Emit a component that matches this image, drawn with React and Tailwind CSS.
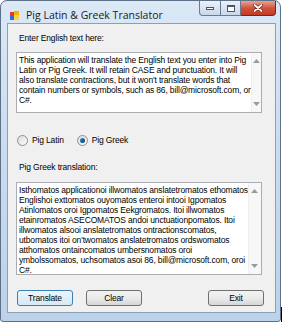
import React from 'react';

const font = { fontFamily: '"Liberation Sans", Arial, sans-serif' };

const inputLines = [
  'This application will translate the English text you enter into Pig',
  'Latin or Pig Greek. It will retain CASE and punctuation. It will',
  "also translate contractions, but it won't translate words that",
  'contain numbers or symbols, such as 86, bill@microsoft.com, or',
  'C#.',
];

const outputLines = [
  'Isthomatos applicationoi illwomatos anslatetromatos ethomatos',
  'Englishoi exttomatos ouyomatos enteroi intooi Igpomatos',
  'Atinlomatos oroi Igpomatos Eekgromatos. Itoi illwomatos',
  'etainromatos ASECOMATOS andoi unctuationpomatos. Itoi',
  'illwomatos alsooi anslatetromatos ontractionscomatos,',
  "utbomatos itoi on'twomatos anslatetromatos ordswomatos",
  'atthomatos ontaincomatos umbersnomatos oroi',
  'ymbolssomatos, uchsomatos asoi 86, bill@microsoft.com, oroi',
  'C#.',
];

const Scrollbar = () => (
  <div className="flex flex-col items-center justify-between w-[15px] h-full bg-[#f7f7f7] border-l border-[#eeeeee] py-[6px]">
    <svg width="7" height="4" viewBox="0 0 7 4">
      <path d="M0 4 L3.5 0 L7 4 Z" fill="#9a9a9a" />
    </svg>
    <svg width="7" height="4" viewBox="0 0 7 4">
      <path d="M0 0 L3.5 4 L7 0 Z" fill="#9a9a9a" />
    </svg>
  </div>
);

const TextBox = ({ lines, height }) => (
  <div className={`flex bg-white border border-[#abadb3] overflow-hidden ${height}`}>
    <div className="flex-1 pl-[2px] pt-[2px] text-[8.5px] leading-[10px] text-black tracking-[-0.15px] whitespace-pre">
      {lines.map((l, i) => (
        <div key={i}>{l}</div>
      ))}
    </div>
    <Scrollbar />
  </div>
);

const Radio = ({ checked, label }) => (
  <div className="flex items-center gap-[4px]">
    <div className="w-[11px] h-[11px] rounded-full border border-[#8e8f8f] bg-gradient-to-br from-[#dcdcdc] to-[#fbfbfb] flex items-center justify-center">
      {checked && (
        <div className="w-[5px] h-[5px] rounded-full bg-gradient-to-br from-[#2f8fd4] to-[#0b3b6b]" />
      )}
    </div>
    <span className="text-[8.5px] text-black tracking-[-0.15px]">{label}</span>
  </div>
);

const Button = ({ label, focused, className }) => (
  <div
    className={`w-[56px] h-[16px] rounded-[3px] border flex items-center justify-center text-[8.5px] text-black tracking-[-0.15px] ${
      focused
        ? 'border-[#3c7fb1] bg-gradient-to-b from-[#eaf6fd] to-[#d5e9f7]'
        : 'border-[#707070] bg-gradient-to-b from-[#f2f2f2] via-[#ebebeb] to-[#d6d6d6]'
    } ${className || ''}`}
  >
    {label}
  </div>
);

export default function App() {
  return (
    <div className="w-[284px] h-[325px] bg-white relative overflow-hidden" style={font}>
      <div className="w-[281px] h-[322px] rounded-t-[7px] rounded-b-[3px] border border-[#5e7187] bg-gradient-to-b from-[#dbe8f6] via-[#c9dbef] to-[#bcd2ea] flex flex-col">
        {/* title bar */}
        <div className="h-[22px] flex items-start justify-between shrink-0">
          <div className="flex items-center gap-[7px] pl-[9px] pt-[7px]">
            <svg width="9" height="9" viewBox="0 0 9 9">
              <rect x="0" y="1" width="4" height="4" fill="#e2382e" />
              <rect x="4" y="0" width="5" height="4" fill="#f4b400" />
              <rect x="0" y="5" width="4" height="4" fill="#2f6fd8" />
              <rect x="4" y="4" width="5" height="5" fill="#f6d24a" />
            </svg>
            <span className="text-[10.5px] text-[#1b1b1b]" style={{ fontFamily: '"Open Sans", "Noto Sans", sans-serif' }}>
              Pig Latin &amp; Greek Translator
            </span>
          </div>
          <div className="flex mr-[4px]">
            <div className="w-[22px] h-[15px] border border-[#6b7b8e] border-t-0 rounded-bl-[4px] bg-gradient-to-b from-[#eaf1f9] to-[#c8d8eb] flex items-center justify-center">
              <div className="w-[8px] h-[3px] border border-[#4a5565] bg-white" />
            </div>
            <div className="w-[20px] h-[15px] border-b border-r border-[#6b7b8e] bg-gradient-to-b from-[#eaf1f9] to-[#c8d8eb] flex items-center justify-center">
              <div className="w-[8px] h-[7px] border border-[#4a5565] border-t-2 bg-white" />
            </div>
            <div className="w-[35px] h-[15px] border-b border-r border-[#6b2a20] rounded-br-[4px] bg-gradient-to-b from-[#e8a391] via-[#d0533c] to-[#c23a22] flex items-center justify-center">
              <svg width="10" height="8" viewBox="0 0 10 8">
                <path d="M1.5 1 L8.5 7 M8.5 1 L1.5 7" stroke="#5a1a10" strokeWidth="3" strokeLinecap="round" />
                <path d="M1.5 1 L8.5 7 M8.5 1 L1.5 7" stroke="#ffffff" strokeWidth="1.8" strokeLinecap="round" />
              </svg>
            </div>
          </div>
        </div>
        {/* client area */}
        <div className="ml-[6px] mr-[3px] w-[269px] h-[290px] bg-[#f0f0f0] border border-[#8e9fb3] flex flex-col">
          <div className="ml-[11px] mt-[9px] h-[10px] flex items-center text-[8.5px] text-black tracking-[-0.15px]">
            Enter English text here:
          </div>
          <div className="ml-[8px] mt-[9px] w-[246px]">
            <TextBox lines={inputLines} height="h-[61px]" />
          </div>
          <div className="ml-[9px] mt-[21px] h-[12px] flex items-center gap-[13px]">
            <Radio label="Pig Latin" />
            <Radio checked label="Pig Greek" />
          </div>
          <div className="ml-[11px] mt-[16px] h-[10px] flex items-center text-[8.5px] text-black tracking-[-0.15px]">
            Pig Greek translation:
          </div>
          <div className="ml-[8px] mt-[10px] w-[246px]">
            <TextBox lines={outputLines} height="h-[93px]" />
          </div>
          <div className="ml-[9px] mt-[15px] flex items-center">
            <Button label="Translate" focused className="w-[55px]" />
            <Button label="Clear" className="ml-[13px]" />
            <Button label="Exit" className="ml-[66px]" />
          </div>
        </div>
      </div>
      <div className="absolute left-[281px] top-[307px] w-[1px] h-[15px] bg-black" />
    </div>
  );
}
